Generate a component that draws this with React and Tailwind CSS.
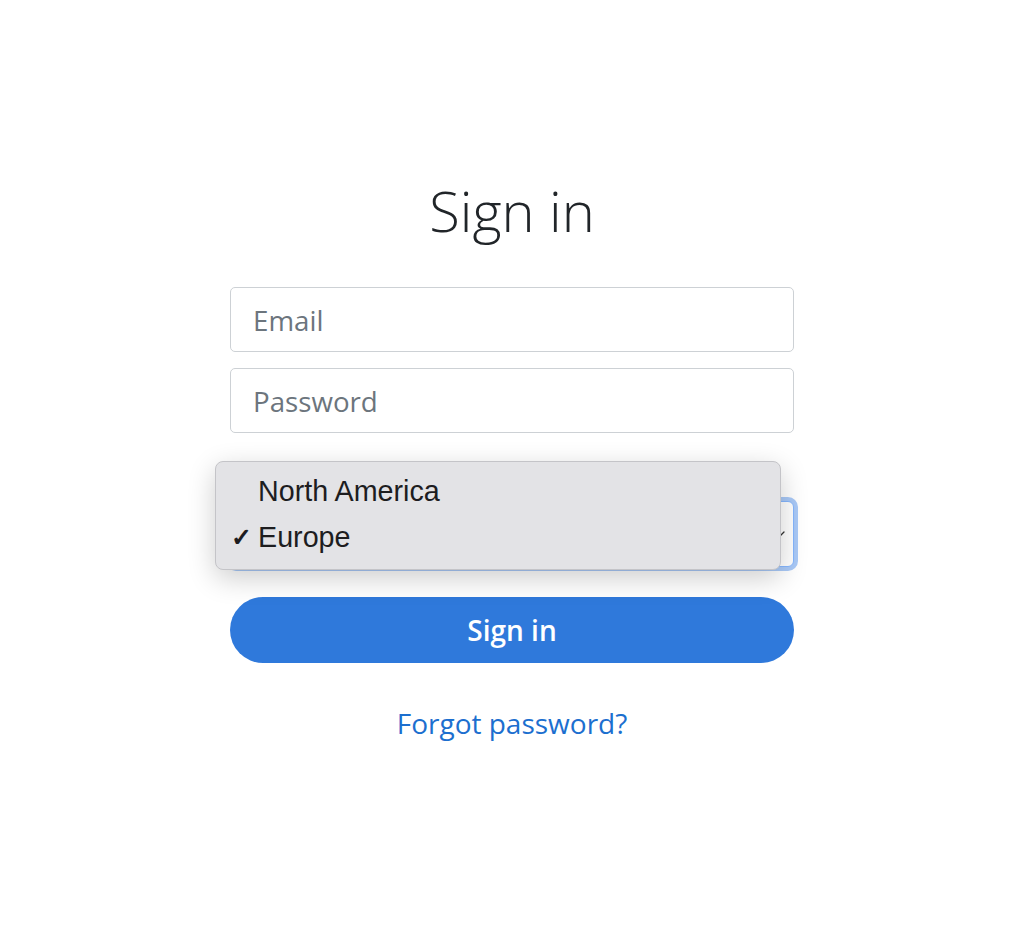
import { useState } from "react"

const SignIn = () => {
  const [region] = useState("europe")

  return (
    <div className="min-h-[936px] w-full bg-white flex justify-center font-['Open_Sans',sans-serif]">
      <div className="w-[564px] pt-[174px] flex flex-col">
        {/* Title */}
        <h1 className="text-center text-[56px] leading-[72px] font-light text-[#212529] mb-[41px]">
          Sign in
        </h1>

        {/* Fields */}
        <div className="flex flex-col gap-4">
          <input
            type="email"
            placeholder="Email"
            className="h-[65px] w-full rounded-[5px] border border-[#cdd1d5] px-[22px] text-[27.7px] text-[#495057] placeholder:text-[#6c757d] outline-none"
          />
          <input
            type="password"
            placeholder="Password"
            className="h-[65px] w-full rounded-[5px] border border-[#cdd1d5] px-[22px] text-[27.7px] text-[#495057] placeholder:text-[#6c757d] outline-none"
          />
        </div>

        {/* Region select with its open menu */}
        <div className="relative mt-[16px]">
          <label className="block mt-[3px] text-[27px] leading-[40px] text-[#212529] mb-[9px]">Region</label>
          <div className="relative h-[66px] w-full rounded-[6px] border border-[#86b7fe] bg-white ring-4 ring-[#a9c9f7]">
            <svg
              className="absolute right-[8px] top-[28px]"
              width="10"
              height="8"
              viewBox="0 0 10 8"
              fill="none"
            >
              <path d="M1 2l4 4 4-4" stroke="#333" strokeWidth="1.3" strokeLinecap="round" />
            </svg>
          </div>

          {/* Menu */}
          <div className="absolute left-[-15px] top-[12px] w-[566px] h-[109px] rounded-[8px] border border-[#c4c4c8] bg-[#e3e3e6] shadow-[0_8px_28px_rgba(0,0,0,0.2)] pt-[6px] font-['Liberation_Sans',Arial,sans-serif] text-[28.7px] leading-[46px] text-[#1d1d1f]">
            {[
              { key: "north_america", label: "North America" },
              { key: "europe", label: "Europe" },
            ].map((o) => (
              <div key={o.key} className="flex items-center">
                <span className="w-[42px] pl-[15px] text-[25px] font-semibold">{region === o.key ? "✓" : ""}</span>
                <span>{o.label}</span>
              </div>
            ))}
          </div>
        </div>

        {/* Submit */}
        <button className="mt-[30px] h-[66px] w-full rounded-full bg-[#2f79db] text-white text-[28px] font-semibold">
          Sign in
        </button>

        <a href="#" className="mt-[39px] text-center text-[28px] text-[#1c6fcf]">
          Forgot password?
        </a>
      </div>
    </div>
  )
}

export default SignIn
